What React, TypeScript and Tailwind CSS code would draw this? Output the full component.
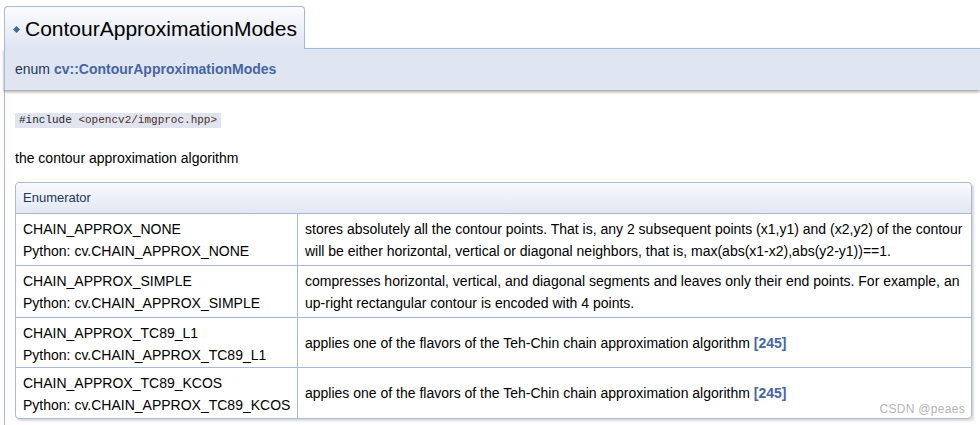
import React from 'react'

const rows = [
    {
        name: 'CHAIN_APPROX_NONE',
        py: 'cv.CHAIN_APPROX_NONE',
        h: 'h-[52px]',
        desc: (
            <>
                stores absolutely all the contour points. That is, any 2 subsequent points (x1,y1) and (x2,y2) of the contour
                <br />
                will be either horizontal, vertical or diagonal neighbors, that is, max(abs(x1-x2),abs(y2-y1))==1.
            </>
        ),
    },
    {
        name: 'CHAIN_APPROX_SIMPLE',
        py: 'cv.CHAIN_APPROX_SIMPLE',
        h: 'h-[52px]',
        desc: (
            <>
                compresses horizontal, vertical, and diagonal segments and leaves only their end points. For example, an
                <br />
                up-right rectangular contour is encoded with 4 points.
            </>
        ),
    },
    {
        name: 'CHAIN_APPROX_TC89_L1',
        py: 'cv.CHAIN_APPROX_TC89_L1',
        h: 'h-[50px]',
        desc: (
            <>
                applies one of the flavors of the Teh-Chin chain approximation algorithm{' '}
                <span className="font-bold text-[#4665a2]">[245]</span>
            </>
        ),
    },
    {
        name: 'CHAIN_APPROX_TC89_KCOS',
        py: 'cv.CHAIN_APPROX_TC89_KCOS',
        h: 'h-[50px]',
        desc: (
            <>
                applies one of the flavors of the Teh-Chin chain approximation algorithm{' '}
                <span className="font-bold text-[#4665a2]">[245]</span>
            </>
        ),
    },
]

export default function App() {
    return (
        <div className="w-[980px] h-[425px] overflow-hidden bg-white font-['Liberation_Sans',Arial,sans-serif] text-black">
            <div className="flex h-full flex-col pt-[6px] pl-[4px]">
                {/* Title tab */}
                <div className="relative z-10 -mb-px flex h-[43px] w-[301px] items-center rounded-t-[4px] border border-b-0 border-[#a8b8d9] bg-gradient-to-b from-[#fbfcfd] to-[#dfe5f1] pl-[9px]">
                    <span className="mr-[6px] mt-[2px] block h-[5px] w-[5px] rotate-45 bg-[#4665a2]" />
                    <h2 className="text-[21px] leading-none text-black">ContourApproximationModes</h2>
                </div>

                {/* Prototype bar */}
                <div className="relative z-[5] flex h-[42px] items-center border-l border-t border-[#a8b8d9] bg-[#dfe5f1] pl-[10px] text-[14px] text-[#253555] shadow-[0_2px_3px_rgba(0,0,0,0.35)]">
                    enum&nbsp;<span className="font-bold text-[#4665a2]">cv::ContourApproximationModes</span>
                </div>

                {/* Doc body */}
                <div className="relative flex-1 border-l border-[#a8b8d9] bg-white pl-[10px] pt-[23px]">
                    <div className="flex">
                        <code className="block h-[15px] bg-[#dfe4ef] px-[4px] font-['Liberation_Mono','DejaVu_Sans_Mono',monospace] text-[11px] leading-[15px] text-[#1e1e1e]">
                            #include <span className="text-[#4e2f28]">&lt;opencv2/imgproc.hpp&gt;</span>
                        </code>
                    </div>

                    <p className="mt-[19px] text-[14px] leading-[22px]">the contour approximation algorithm</p>

                    <div className="relative mt-[13px] w-[957px] rounded-[4px] border border-[#a8b8d9] shadow-[2px_2px_2px_rgba(0,0,0,0.15)]">
                        <div className="flex h-[31px] items-center rounded-t-[4px] border-b border-[#a8b8d9] bg-gradient-to-b from-[#f8f9fc] to-[#e2e8f2] pl-[7px] text-[13px] text-[#253555]">
                            Enumerator
                        </div>
                        {rows.map((r, i) => (
                            <div
                                key={r.name}
                                className={`grid grid-cols-[282px_1fr] ${r.h} ${i < rows.length - 1 ? 'border-b border-[#a8b8d9]' : ''}`}
                            >
                                <div className="border-r border-[#a8b8d9] pl-[7px] pt-[4px] text-[14px] leading-[22px] whitespace-nowrap">
                                    <div>{r.name}</div>
                                    <div>Python: {r.py}</div>
                                </div>
                                <div className="flex items-center pl-[7px] text-[14px] leading-[22px] whitespace-nowrap">
                                    <div>{r.desc}</div>
                                </div>
                            </div>
                        ))}
                        <span className="absolute bottom-[3px] right-[6px] text-[12px] leading-none tracking-[0.3px] text-[#b4b4b4]">CSDN @peaes</span>
                    </div>
                </div>
            </div>
        </div>
    )
}
